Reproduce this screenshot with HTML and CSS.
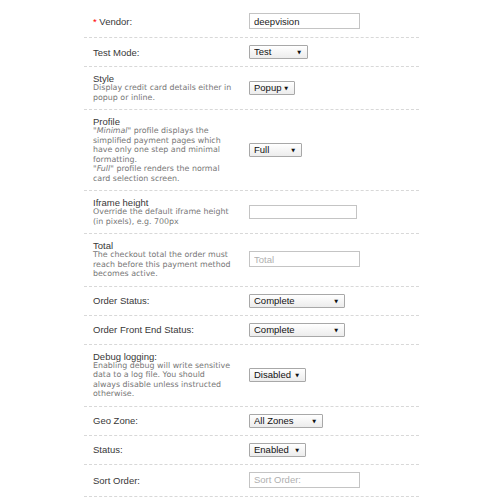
FILE: index.html
```html
<!DOCTYPE html>
<html>
<head>
<meta charset="utf-8">
<link rel="stylesheet" href="styles.css">
</head>
<body>
<div class="form">
  <div class="row">
    <div class="label"><span class="name"><span class="req">*</span> Vendor:</span></div>
    <div class="ctl"><input class="text" type="text" value="deepvision"></div>
  </div>
  <div class="row">
    <div class="label"><span class="name">Test Mode:</span></div>
    <div class="ctl"><span class="sel w-test"><select><option>Test</option></select></span></div>
  </div>
  <div class="row">
    <div class="label"><span class="name">Style</span><span class="help">Display credit card details either in popup or inline.</span></div>
    <div class="ctl"><span class="sel w-popup"><select><option>Popup</option></select></span></div>
  </div>
  <div class="row">
    <div class="label"><span class="name">Profile</span><span class="help"><span class="line"><em>"Minimal"</em> profile displays the simplified payment pages which have only one step and minimal formatting.</span><span class="line"><em>"Full"</em> profile renders the normal card selection screen.</span></span></div>
    <div class="ctl"><span class="sel w-full"><select><option>Full</option></select></span></div>
  </div>
  <div class="row">
    <div class="label"><span class="name">Iframe height</span><span class="help">Override the default iframe height (in pixels), e.g. 700px</span></div>
    <div class="ctl"><input class="text short" type="text" value=""></div>
  </div>
  <div class="row">
    <div class="label"><span class="name">Total</span><span class="help">The checkout total the order must reach before this payment method becomes active.</span></div>
    <div class="ctl"><input class="text" type="text" placeholder="Total"></div>
  </div>
  <div class="row">
    <div class="label"><span class="name">Order Status:</span></div>
    <div class="ctl"><span class="sel w-complete"><select><option>Complete</option></select></span></div>
  </div>
  <div class="row">
    <div class="label"><span class="name">Order Front End Status:</span></div>
    <div class="ctl"><span class="sel w-complete"><select><option>Complete</option></select></span></div>
  </div>
  <div class="row">
    <div class="label"><span class="name">Debug logging:</span><span class="help">Enabling debug will write sensitive data to a log file. You should always disable unless instructed otherwise.</span></div>
    <div class="ctl"><span class="sel w-enabled"><select><option>Disabled</option></select></span></div>
  </div>
  <div class="row">
    <div class="label"><span class="name">Geo Zone:</span></div>
    <div class="ctl"><span class="sel w-zones"><select><option>All Zones</option></select></span></div>
  </div>
  <div class="row">
    <div class="label"><span class="name">Status:</span></div>
    <div class="ctl"><span class="sel w-enabled"><select><option>Enabled</option></select></span></div>
  </div>
  <div class="row">
    <div class="label"><span class="name">Sort Order:</span></div>
    <div class="ctl"><input class="text" type="text" placeholder="Sort Order:"></div>
  </div>
</div>
</body>
</html>
```
FILE: styles.css
```css
html, body {
  margin: 0;
  padding: 0;
  background: #fff;
}
body {
  font-family: "Liberation Sans", Arial, sans-serif;
  font-size: 9.5px;
  color: #383838;
}
.form {
  width: 335px;
  margin-left: 84px;
  padding-top: 6px;
}
.row {
  display: grid;
  grid-template-columns: 165px 1fr;
  align-items: center;
  padding: 7px 0;
  border-bottom: 1px dashed #d8d8d8;
}
.label {
  padding: 0 15px 0 9px;
}
.name {
  display: block;
  line-height: 9px;
}
.req {
  color: #f00;
}
.help {
  display: block;
  font-family: "DejaVu Sans", Verdana, sans-serif;
  font-size: 7.9px;
  line-height: 9.5px;
  color: #777;
}
.help .line {
  display: block;
}
.help em {
  font-style: italic;
}
.ctl {
  display: flex;
  align-items: center;
}
.text {
  box-sizing: border-box;
  width: 111px;
  height: 16px;
  margin: 0 0 1px 0;
  padding: 0 4px;
  border: 1px solid #c4c4c4;
  border-radius: 0;
  background: #fff;
  font-family: "Liberation Sans", Arial, sans-serif;
  font-size: 9.5px;
  color: #222;
  outline: none;
}
.text.short {
  width: 108px;
  height: 14px;
}
.text::placeholder {
  color: #b0b0b0;
}
.sel {
  position: relative;
  display: inline-block;
}
.sel select {
  appearance: none;
  -webkit-appearance: none;
  box-sizing: border-box;
  display: block;
  width: 100%;
  height: 14px;
  margin: 0;
  padding: 0 0 0 4px;
  border: 1px solid #a8a8a8;
  border-radius: 1px;
  background: linear-gradient(#ffffff, #ececec);
  font-family: "Liberation Sans", Arial, sans-serif;
  font-size: 9.5px;
  line-height: 12px;
  color: #111;
  outline: none;
}
.sel::after {
  content: "\25BC";
  position: absolute;
  right: 7px;
  top: 4px;
  font-family: "DejaVu Sans", sans-serif;
  font-size: 5px;
  line-height: 6px;
  color: #111;
  pointer-events: none;
}
.w-test { width: 59px; }
.w-popup { width: 46px; }
.w-full { width: 53px; }
.w-complete { width: 96px; }
.w-enabled { width: 57px; }
.w-zones { width: 74px; }
```
